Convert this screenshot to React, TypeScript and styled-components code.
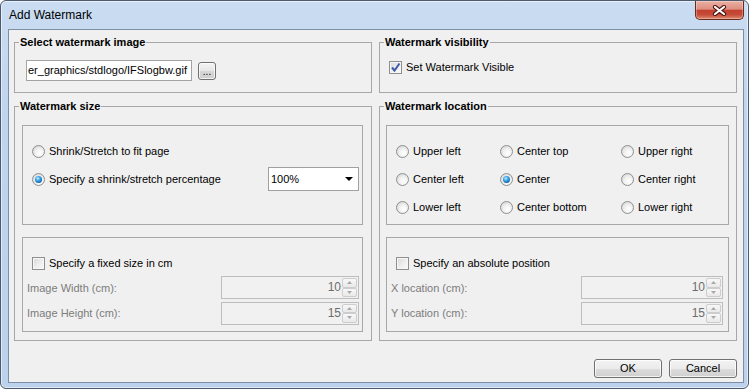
import React from 'react'
import styled, { createGlobalStyle } from 'styled-components'

const GlobalStyle = createGlobalStyle`
  html, body {
    margin: 0;
    padding: 0;
    background: #ffffff;
  }
  body {
    font-family: 'Liberation Sans', Arial, sans-serif;
    font-size: 11px;
    color: #000000;
  }
  * {
    box-sizing: border-box;
  }
`

const Window = styled.div`
  width: 749px;
  height: 389px;
  border: 1px solid #4b5a6e;
  border-radius: 6px;
  background: linear-gradient(180deg, #cadcf1 0%, #bfd5ee 30%, #bcd2ec 100%);
  box-shadow: inset 0 0 0 1px rgba(255, 255, 255, 0.55);
  display: flex;
  flex-direction: column;
  overflow: hidden;
`

const TitleBar = styled.div`
  height: 28px;
  flex: none;
  display: flex;
  justify-content: space-between;
  padding: 0 4px 0 8px;
`

const Title = styled.div`
  font-size: 12px;
  line-height: 28px;
  color: #000000;
`

const CloseButton = styled.div`
  width: 49px;
  height: 19px;
  border: 1px solid #6a2a22;
  border-top: none;
  border-radius: 0 0 5px 5px;
  background: linear-gradient(
    180deg,
    #eab0a3 0%,
    #dd8f80 45%,
    #c4402f 52%,
    #c64a38 75%,
    #de8a6c 100%
  );
  box-shadow: inset 0 0 0 1px rgba(255, 255, 255, 0.3);
  display: flex;
  align-items: center;
  justify-content: center;
`

const Client = styled.div`
  flex: 1;
  margin: 0 4px 5px 7px;
  border: 1px solid #7d8fa6;
  background: #f0f0f0;
  padding: 6px 6px 4px 5px;
  display: flex;
  flex-direction: column;
`

const Groups = styled.div`
  display: grid;
  grid-template-columns: 358px 358px;
  grid-template-rows: 57px 241px;
  gap: 7px;
`

const Group = styled.fieldset`
  margin: 0;
  padding: 0;
  min-width: 0;
  border: 1px solid #a7a7a7;
`

const Legend = styled.legend`
  font-weight: bold;
  font-size: 11px;
  line-height: 13px;
  padding: 0 1px;
  margin-left: 4px;
`

const GroupBody = styled.div<{ $pad: string }>`
  padding: ${(p) => p.$pad};
  display: flex;
  flex-direction: column;
  gap: 12px;
`

const FileRow = styled.div`
  display: flex;
  align-items: center;
  gap: 6px;
`

const TextField = styled.div`
  width: 166px;
  height: 21px;
  border: 1px solid #a3a3a3;
  background: #ffffff;
  padding-left: 1px;
  line-height: 19px;
  white-space: nowrap;
  overflow: hidden;
`

const SmallButton = styled.div`
  width: 18px;
  height: 18px;
  border: 1px solid #707070;
  border-radius: 3px;
  background: linear-gradient(180deg, #f4f4f4 0%, #e6e6e6 50%, #d6d6d6 51%, #cfcfcf 100%);
  box-shadow: inset 0 0 0 1px rgba(255, 255, 255, 0.7);
  font-size: 10px;
  line-height: 17px;
  text-align: center;
`

const Panel = styled.div<{ $h: number }>`
  height: ${(p) => p.$h}px;
  border: 1px solid #a7a7a7;
`

const OptionGrid = styled.div<{ $cols: string }>`
  height: 100%;
  padding: 13px 3px 0 9px;
  display: grid;
  grid-template-columns: ${(p) => p.$cols};
  grid-auto-rows: 24px;
  row-gap: 4px;
`

const OptionRow = styled.div`
  display: flex;
  align-items: center;
  justify-content: space-between;
`

const OptionLabel = styled.label`
  display: flex;
  align-items: center;
  gap: 4px;
  line-height: 13px;
  white-space: nowrap;
`

const RadioCircle = styled.span<{ $on?: boolean }>`
  flex: none;
  width: 13px;
  height: 13px;
  border-radius: 50%;
  border: 1px solid #8e8f8f;
  background: radial-gradient(circle at 60% 65%, #ffffff 0%, #f2f2f2 40%, #d5d5d5 85%, #c8c8c8 100%);
  display: flex;
  align-items: center;
  justify-content: center;

  &::after {
    content: '';
    display: ${(p) => (p.$on ? 'block' : 'none')};
    width: 7px;
    height: 7px;
    border-radius: 50%;
    background: radial-gradient(circle at 40% 35%, #bdefff 0%, #3fa9e8 35%, #0f5fa8 75%, #0a3a6c 100%);
  }
`

const CheckSquare = styled.span`
  flex: none;
  width: 13px;
  height: 13px;
  border: 1px solid #8e8f8f;
  background: linear-gradient(135deg, #d8d8d8 0%, #eeeeee 55%, #fbfbfb 100%);
  box-shadow: inset 0 0 0 1px #f6f6f6;
  display: flex;
  align-items: center;
  justify-content: center;
`

const Combo = styled.div`
  width: 91px;
  height: 24px;
  border: 1px solid #a0a0a0;
  background: #ffffff;
  display: flex;
  align-items: center;
  justify-content: space-between;
  padding: 0 5px 0 2px;
`

const VisibleRow = styled.div`
  height: 20px;
  display: flex;
  align-items: center;
`

const SizeGrid = styled.div<{ $right: number }>`
  height: 100%;
  padding: 13px ${(p) => p.$right}px 0 4px;
  display: grid;
  grid-template-rows: 24px 23px 23px;
  row-gap: 1px;
`

const CheckRow = styled.div`
  display: flex;
  align-items: center;
  padding-left: 5px;
`

const FieldRow = styled.div`
  display: flex;
  align-items: center;
  justify-content: space-between;

  &:last-child {
    margin-top: 3px;
  }
`

const FieldLabel = styled.span`
  color: #7c7c7c;
`

const SpinnerBox = styled.div<{ $w: number }>`
  width: ${(p) => p.$w}px;
  height: 23px;
  border: 1px solid #bdbdbd;
  background: #f1f1f1;
  padding: 1px;
  display: flex;
`

const SpinValue = styled.div`
  flex: 1;
  text-align: right;
  color: #6d6d6d;
  font-size: 12px;
  line-height: 19px;
  padding-right: 1px;
`

const SpinButtons = styled.div`
  width: 15px;
  display: flex;
  flex-direction: column;
`

const SpinButton = styled.div`
  flex: 1;
  border: 1px solid #cdcdcd;
  border-radius: 2px;
  background: linear-gradient(180deg, #f8f8f8 0%, #e9e9e9 100%);
  display: flex;
  align-items: center;
  justify-content: center;
`

const Footer = styled.div`
  margin-top: 18px;
  display: flex;
  justify-content: flex-end;
  gap: 7px;
`

const DialogButton = styled.div`
  width: 68px;
  height: 19px;
  border: 1px solid #707070;
  border-radius: 3px;
  background: linear-gradient(180deg, #f3f3f3 0%, #ebebeb 50%, #dddddd 51%, #cfcfcf 100%);
  box-shadow: inset 0 0 0 1px rgba(255, 255, 255, 0.75);
  font-size: 11px;
  line-height: 17px;
  text-align: center;
`

const Radio: React.FC<{ label: string; checked?: boolean }> = ({ label, checked }) => (
  <OptionLabel>
    <RadioCircle $on={checked} />
    <span>{label}</span>
  </OptionLabel>
)

const CheckBox: React.FC<{ label: string; checked?: boolean }> = ({ label, checked }) => (
  <OptionLabel>
    <CheckSquare>
      {checked && (
        <svg width="11" height="11" viewBox="0 0 11 11">
          <path d="M2 5.5 L4.5 8.5 L9.5 1.5" fill="none" stroke="#3e5ba6" strokeWidth="2" />
        </svg>
      )}
    </CheckSquare>
    <span>{label}</span>
  </OptionLabel>
)

const Spinner: React.FC<{ value: string; width: number }> = ({ value, width }) => (
  <SpinnerBox $w={width}>
    <SpinValue>{value}</SpinValue>
    <SpinButtons>
      <SpinButton>
        <svg width="5" height="3" viewBox="0 0 5 3">
          <polygon points="2.5,0 5,3 0,3" fill="#a8a8a8" />
        </svg>
      </SpinButton>
      <SpinButton>
        <svg width="5" height="3" viewBox="0 0 5 3">
          <polygon points="0,0 5,0 2.5,3" fill="#a8a8a8" />
        </svg>
      </SpinButton>
    </SpinButtons>
  </SpinnerBox>
)

const locations = [
  ['Upper left', 'Center top', 'Upper right'],
  ['Center left', 'Center', 'Center right'],
  ['Lower left', 'Center bottom', 'Lower right'],
]

const App: React.FC = () => (
  <>
    <GlobalStyle />
    <Window>
      <TitleBar>
        <Title>Add Watermark</Title>
        <CloseButton>
          <svg width="15" height="11" viewBox="0 0 15 11">
            <path d="M3 2 L12 9 M12 2 L3 9" stroke="#4a1810" strokeWidth="4.2" strokeLinecap="round" />
            <path d="M3 2 L12 9 M12 2 L3 9" stroke="#ffffff" strokeWidth="2.2" strokeLinecap="round" />
          </svg>
        </CloseButton>
      </TitleBar>
      <Client>
        <Groups>
          <Group>
            <Legend>Select watermark image</Legend>
            <GroupBody $pad="11px 0 0 11px">
              <FileRow>
                <TextField>er_graphics/stdlogo/IFSlogbw.gif</TextField>
                <SmallButton>...</SmallButton>
              </FileRow>
            </GroupBody>
          </Group>
          <Group>
            <Legend>Watermark visibility</Legend>
            <GroupBody $pad="8px 0 0 9px">
              <VisibleRow>
                <CheckBox label="Set Watermark Visible" checked />
              </VisibleRow>
            </GroupBody>
          </Group>
          <Group>
            <Legend>Watermark size</Legend>
            <GroupBody $pad="12px 8px 0 7px">
              <Panel $h={100}>
                <OptionGrid $cols="1fr">
                  <OptionRow>
                    <Radio label="Shrink/Stretch to fit page" />
                  </OptionRow>
                  <OptionRow>
                    <Radio label="Specify a shrink/stretch percentage" checked />
                    <Combo>
                      <span>100%</span>
                      <svg width="8" height="4" viewBox="0 0 8 4">
                        <polygon points="0,0 8,0 4,4" fill="#000000" />
                      </svg>
                    </Combo>
                  </OptionRow>
                </OptionGrid>
              </Panel>
              <Panel $h={95}>
                <SizeGrid $right={3}>
                  <CheckRow>
                    <CheckBox label="Specify a fixed size in cm" />
                  </CheckRow>
                  <FieldRow>
                    <FieldLabel>Image Width (cm):</FieldLabel>
                    <Spinner value="10" width={138} />
                  </FieldRow>
                  <FieldRow>
                    <FieldLabel>Image Height (cm):</FieldLabel>
                    <Spinner value="15" width={138} />
                  </FieldRow>
                </SizeGrid>
              </Panel>
            </GroupBody>
          </Group>
          <Group>
            <Legend>Watermark location</Legend>
            <GroupBody $pad="12px 7px 0 6px">
              <Panel $h={100}>
                <OptionGrid $cols="104px 121px 1fr">
                  {locations.flat().map((name) => (
                    <OptionRow key={name}>
                      <Radio label={name} checked={name === 'Center'} />
                    </OptionRow>
                  ))}
                </OptionGrid>
              </Panel>
              <Panel $h={95}>
                <SizeGrid $right={5}>
                  <CheckRow>
                    <CheckBox label="Specify an absolute position" />
                  </CheckRow>
                  <FieldRow>
                    <FieldLabel>X location (cm):</FieldLabel>
                    <Spinner value="10" width={142} />
                  </FieldRow>
                  <FieldRow>
                    <FieldLabel>Y location (cm):</FieldLabel>
                    <Spinner value="15" width={142} />
                  </FieldRow>
                </SizeGrid>
              </Panel>
            </GroupBody>
          </Group>
        </Groups>
        <Footer>
          <DialogButton>OK</DialogButton>
          <DialogButton>Cancel</DialogButton>
        </Footer>
      </Client>
    </Window>
  </>
)

export default App
